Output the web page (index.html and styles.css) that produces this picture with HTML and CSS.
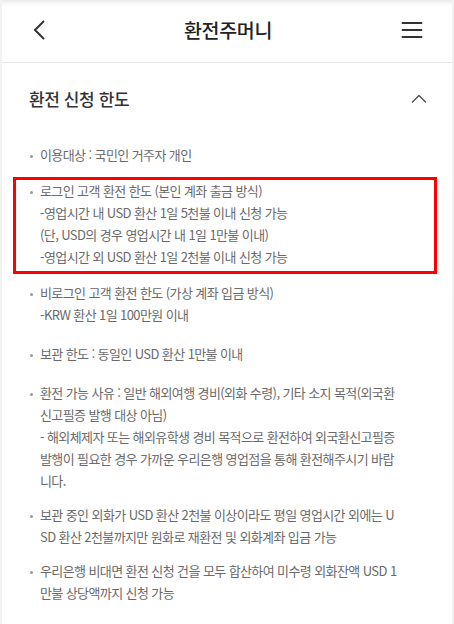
FILE: index.html
```html
<!DOCTYPE html>
<html lang="ko">
<head>
<meta charset="utf-8">
<title>환전주머니</title>
<link rel="stylesheet" href="styles.css">
</head>
<body>
<div class="page">
  <header class="topbar">
    <button class="icon-btn back" aria-label="뒤로">
      <svg width="12" height="20" viewBox="0 0 12 20"><polyline points="10.5,1.5 2,10 10.5,18.5" fill="none" stroke="#333" stroke-width="2" stroke-linecap="round" stroke-linejoin="round"/></svg>
    </button>
    <h1 class="title">환전주머니</h1>
    <button class="icon-btn menu" aria-label="메뉴">
      <svg width="22" height="18" viewBox="0 0 22 18"><g stroke="#333" stroke-width="1.9" stroke-linecap="round"><line x1="1.5" y1="2" x2="20.5" y2="2"/><line x1="1.5" y1="9" x2="20.5" y2="9"/><line x1="1.5" y1="16" x2="20.5" y2="16"/></g></svg>
    </button>
  </header>

  <section class="section">
    <div class="section-head">
      <h2 class="section-title">환전 신청 한도</h2>
      <svg class="caret" width="16" height="10" viewBox="0 0 16 10"><polyline points="1.5,8 8,1.5 14.5,8" fill="none" stroke="#555" stroke-width="1.5" stroke-linecap="round" stroke-linejoin="round"/></svg>
    </div>
    <ul class="list">
      <li class="item">이용대상 : 국민인 거주자 개인</li>
      <li class="item highlight">로그인 고객 환전 한도 (본인 계좌 출금 방식)<br>-영업시간 내 USD 환산 1일 5천불 이내 신청 가능<br>(단, USD의 경우 영업시간 내 1일 1만불 이내)<br>-영업시간 외 USD 환산 1일 2천불 이내 신청 가능</li>
      <li class="item after-box">비로그인 고객 환전 한도 (가상 계좌 입금 방식)<br>-KRW 환산 1일 100만원 이내</li>
      <li class="item wide">보관 한도 : 동일인 USD 환산 1만불 이내</li>
      <li class="item wide">환전 가능 사유 : 일반 해외여행 경비(외화 수령), 기타 소지 목적(외국환<br>신고필증 발행 대상 아님)<br>- 해외체제자 또는 해외유학생 경비 목적으로 환전하여 외국환신고필증<br>발행이 필요한 경우 가까운 우리은행 영업점을 통해 환전해주시기 바랍<br>니다.</li>
      <li class="item">보관 중인 외화가 USD 환산 2천불 이상이라도 평일 영업시간 외에는 U<br>SD 환산 2천불까지만 원화로 재환전 및 외화계좌 입금 가능</li>
      <li class="item">우리은행 비대면 환전 신청 건을 모두 합산하여 미수령 외화잔액 USD 1<br>만불 상당액까지 신청 가능</li>
    </ul>
  </section>
</div>
</body>
</html>
```

FILE: styles.css
```css
* { box-sizing: border-box; }
html, body { margin: 0; padding: 0; }
body {
  background: #f3f3f3;
  font-family: "Noto Sans CJK KR", "Noto Sans", sans-serif;
  width: 454px;
  height: 624px;
  overflow: hidden;
}
.page {
  margin: 0 2px;
  background: #fff;
  min-height: 624px;
}
.topbar {
  height: 63px;
  display: grid;
  grid-template-columns: 1fr auto 1fr;
  align-items: center;
  padding: 0 29px 2px 31px;
  border-bottom: 1px solid #e7e7e7;
  background: linear-gradient(to bottom, #ececec 0px, #fafafa 4px, #fff 7px);
}
.icon-btn {
  background: none;
  border: 0;
  padding: 0;
  display: flex;
  align-items: center;
  cursor: pointer;
}
.back { justify-self: start; }
.menu { justify-self: end; }
.title {
  margin: 0;
  font-size: 19.5px;
  font-weight: 500;
  color: #222;
  letter-spacing: -0.3px;
  line-height: 26px;
}
.section-head {
  height: 72px;
  display: flex;
  align-items: center;
  justify-content: space-between;
  padding: 0 25px 0 27px;
}
.section-title {
  margin: 0;
  font-size: 17px;
  font-weight: 500;
  color: #333;
  letter-spacing: -0.4px;
  line-height: 24px;
}
.caret { display: block; }
.list {
  list-style: none;
  margin: 0;
  padding: 9px 0 0;
}
.item {
  display: block;
  position: relative;
  padding-left: 38px;
  font-size: 13px;
  line-height: 22px;
  color: #6a6a6a;
  letter-spacing: -0.6px;
  white-space: nowrap;
  margin-top: 12px;
}
.item:first-child { margin-top: 0; }
.item::before {
  content: "";
  position: absolute;
  left: 28px;
  top: 11px;
  width: 3px;
  height: 3px;
  border-radius: 50%;
  background: #9a9a9a;
}
.highlight {
  margin: 11px 15px 0 11px;
  border: 3px solid #ff0000;
  padding: 0 0 3px 24px;
}
.highlight::before { left: 14px; }
.after-box { margin-top: 8px; }
.wide { margin-top: 17px; }
```
